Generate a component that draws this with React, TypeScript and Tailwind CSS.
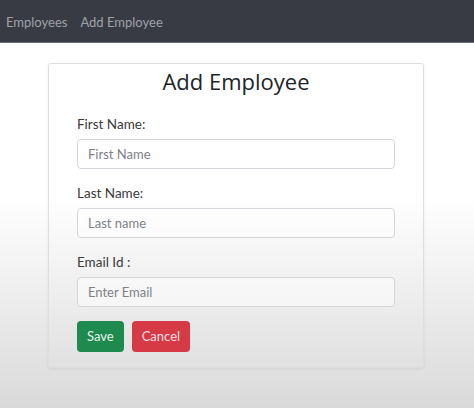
import React from "react";

const Field = ({ label, placeholder }: { label: string; placeholder: string }) => {
  return (
    <div className="mb-[14px]">
      <label className="block text-[13.5px] leading-[21px] text-[#3a3a3a] mb-[4px]">{label}</label>
      <input
        placeholder={placeholder}
        className="block w-full h-[30px] px-[10px] text-[13px] rounded-[4px] border border-[#d3d6da] bg-white/50 text-[#333] placeholder:text-[#7d8288] outline-none"
      />
    </div>
  );
};

const App = () => {
  return (
    <div
      className="w-[474px] h-[408px] overflow-hidden bg-[linear-gradient(to_bottom,#ffffff_0%,#ffffff_48%,#f1f1f1_68%,#d9d9d9_100%)]"
      style={{ fontFamily: 'Lato, "Open Sans", sans-serif' }}
    >
      {/* Navbar */}
      <nav className="h-[43px] bg-[#383b43] border-b border-[#6b6e74] flex items-center px-[6px] pt-[3px] gap-[13px]">
        <a className="text-[13px] text-[#9fa2a9]">Employees</a>
        <a className="text-[13px] text-[#9fa2a9]">Add Employee</a>
      </nav>

      {/* Card */}
      <div className="ml-[48px] mt-[20px] w-[376px] border border-[#dedede] rounded-[3px] shadow-[0_1px_3px_rgba(0,0,0,0.06)] px-[28px] pb-[15px]">
        <h2 className="text-center text-[22px] leading-[30px] text-[#212529] mt-[2px] mb-[18px] font-['Open_Sans',sans-serif]">
          Add Employee
        </h2>
        <Field label="First Name:" placeholder="First Name" />
        <Field label="Last Name:" placeholder="Last name" />
        <Field label="Email Id :" placeholder="Enter Email" />
        <div className="flex gap-[8px]">
          <button className="h-[31px] px-[10px] rounded-[4px] bg-[#1f8a4d] text-[#e8f3ec] text-[13px]">Save</button>
          <button className="h-[31px] px-[10px] rounded-[4px] bg-[#d63a45] text-[#f6dfe1] text-[13px]">Cancel</button>
        </div>
      </div>
    </div>
  );
};

export default App;
